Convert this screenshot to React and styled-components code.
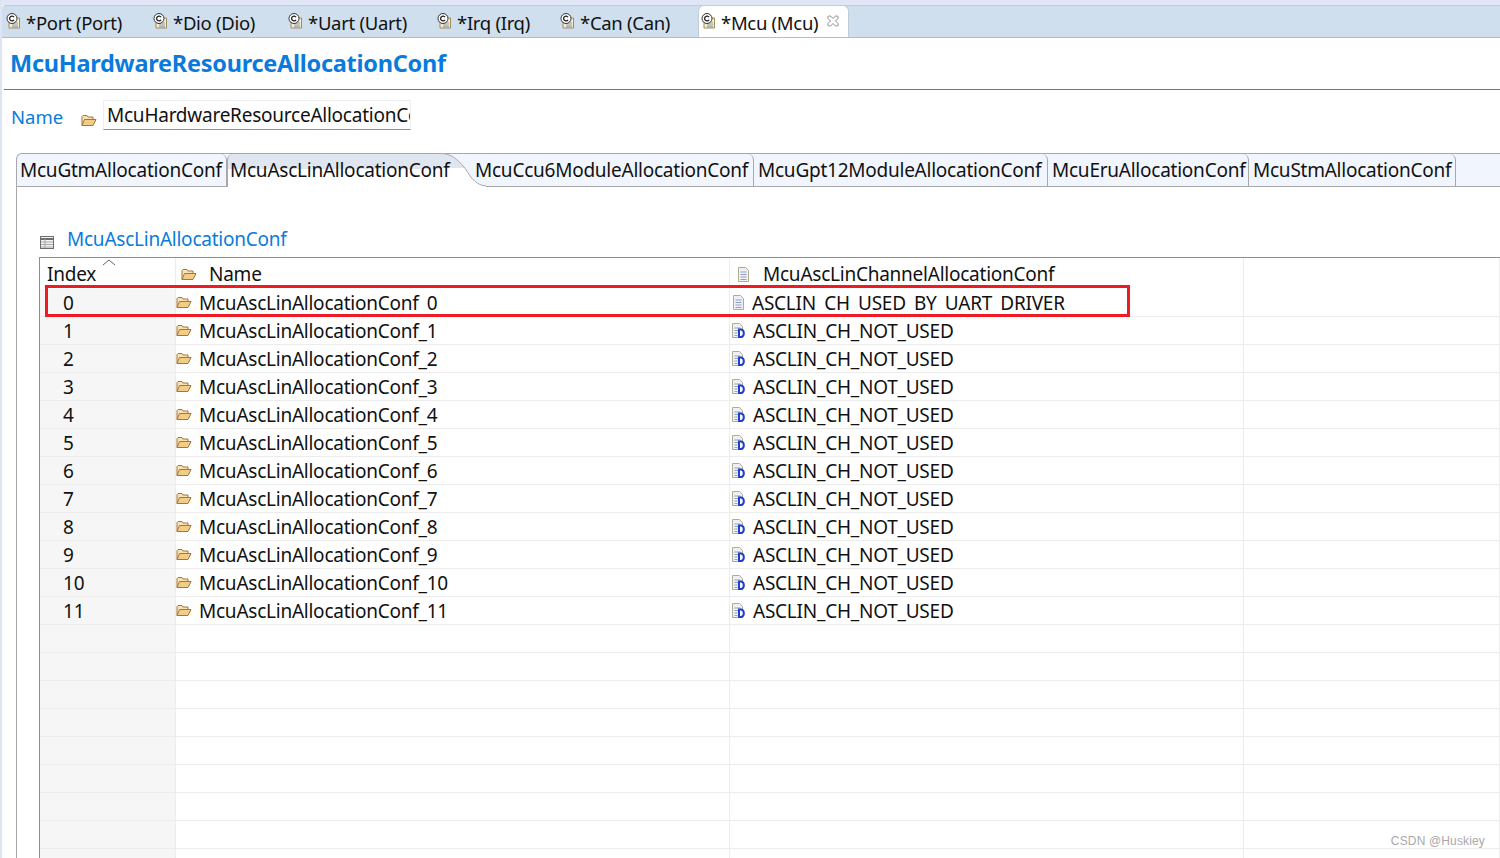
import React from 'react';
import styled, { createGlobalStyle } from 'styled-components';

const Global = createGlobalStyle`
  html, body { margin: 0; padding: 0; background: #fff; }
  body { font-family: "Noto Sans", "Open Sans", sans-serif; color: #111; overflow: hidden; }
`;

const Window = styled.div`
  position: relative;
  width: 1500px;
  height: 858px;
  overflow: hidden;
  background: #fff;
  border-left: 2px solid #dfe4f3;
  box-sizing: border-box;
  display: flex;
  flex-direction: column;
`;

const EditorTop = styled.div`
  height: 5px;
  margin-left: -2px;
  background: #e0e6f5;
  flex: none;
`;

const EditorTabs = styled.div`
  height: 33px;
  flex: none;
  display: flex;
  box-sizing: border-box;
  padding-left: 4px;
  background: #cfdfee;
  border-top: 1px solid #c3cbd6;
  border-bottom: 1px solid #b5bcc6;
  border-top-left-radius: 4px;
`;

const EditorTab = styled.div`
  width: ${p => p.$w}px;
  flex: none;
  display: flex;
  align-items: center;
  gap: 5px;
  height: ${p => (p.$active ? '32px' : '31px')};
  box-sizing: border-box;
  font-size: 18.5px;
  letter-spacing: -0.3px;
  white-space: nowrap;
  padding-top: 1px;
  ${p => p.$active && `
    background: #fff;
    margin-top: -1px;
    padding-left: 2px;
    border: 1px solid #c3cbd6;
    border-bottom: none;
    border-radius: 6px 6px 0 0;
  `}
`;

const EditorGlyph = styled.svg`
  flex: none;
  margin-top: -3px;
`;

const CloseBox = styled.span`
  display: flex;
  margin-left: 4px;
  margin-top: -2px;
`;

const Header = styled.div`
  flex: none;
  height: 52px;
  margin-left: 2px;
  box-sizing: border-box;
  border-bottom: 1px solid #3488cf;
  display: flex;
  align-items: center;
  padding: 0 0 1px 6px;
`;

const Title = styled.h1`
  margin: 0;
  font-size: 23.5px;
  font-weight: 700;
  color: #0a7bdc;
  letter-spacing: -0.27px;
`;

const NameRow = styled.div`
  flex: none;
  height: 63px;
  display: flex;
  align-items: flex-start;
  padding: 10px 0 0 8px;
  box-sizing: border-box;
`;

const NameLabel = styled.span`
  font-size: 18.5px;
  color: #0a7bdc;
  line-height: 34px;
  width: 71px;
  box-sizing: border-box;
  padding-left: 1px;
`;

const FolderSlot = styled.span`
  width: 22px;
  display: flex;
  padding-top: 14px;
`;

const NameInput = styled.div`
  width: 308px;
  height: 30px;
  box-sizing: border-box;
  overflow: hidden;
  background: #fff;
  border-bottom: 1px solid #8f8f8f;
  border-left: 1px solid #eee;
  border-right: 1px solid #eee;
  border-top: 1px solid #eee;
  padding-left: 3px;
  font-size: 19px;
  letter-spacing: -0.24px;
  line-height: 29px;
  white-space: nowrap;
`;

const Folder = styled.div`
  flex: 1;
  min-height: 0;
  margin-left: 14px;
  display: flex;
  flex-direction: column;
`;

const FolderTabs = styled.div`
  height: 34px;
  flex: none;
  display: flex;
  box-sizing: border-box;
  background: #f1f6fe;
  border-top: 1px solid #a8a8a8;
  border-bottom: 1px solid #a8a8a8;
  border-left: 1px solid #a8a8a8;
  border-top-left-radius: 6px;
`;

const FolderTab = styled.div`
  position: relative;
  width: ${p => p.$w}px;
  flex: none;
  box-sizing: border-box;
  padding-left: ${p => p.$pad}px;
  font-size: 19px;
  line-height: 32px;
  white-space: nowrap;
  letter-spacing: -0.24px;
  border-right: 1px solid #a8a8a8;
  border-top-right-radius: 6px;
  ${p => p.$active && `
    height: 33px;
    background: linear-gradient(#dfe6ef 0, #dfe6ef 15px, #fff 15px) no-repeat;
    background-size: 213px 100%;
    border-right: none;
    border-left: 1px solid #a8a8a8;
    border-top-left-radius: 6px;
    border-top-right-radius: 0;
    z-index: 1;
  `}
`;

const TabCurve = styled.svg`
  position: absolute;
  left: 213px;
  top: -1px;
  z-index: -1;
`;

const FolderBody = styled.div`
  flex: 1;
  min-height: 0;
  border-left: 1px solid #a8a8a8;
  padding: 38px 0 0 22px;
  display: flex;
  flex-direction: column;
`;

const SectionHead = styled.div`
  flex: none;
  height: 32px;
  display: flex;
  align-items: flex-start;
  color: #0a7bdc;
  font-size: 19px;
  line-height: 28px;
  letter-spacing: -0.24px;
`;

const SectionIcon = styled.span`
  width: 28px;
  box-sizing: border-box;
  display: flex;
  padding: 11px 0 0 1px;
`;

const TableWrap = styled.div`
  flex: 1;
  min-height: 0;
  border-top: 1px solid #8c8c8c;
  border-left: 1px solid #8c8c8c;
  overflow: hidden;
`;

const Row = styled.div`
  display: grid;
  grid-template-columns: 136px 554px 514px 1fr;
  height: ${p => (p.$head ? 31 : 28)}px;
  box-sizing: border-box;
  border-bottom: ${p => (p.$head ? 'none' : '1px solid #ececec')};
`;

const Cell = styled.div`
  display: flex;
  align-items: center;
  font-size: 19px;
  letter-spacing: -0.24px;
  white-space: nowrap;
  border-right: 1px solid #ececec;
  box-sizing: border-box;
  padding-left: ${p => p.$pad || 0}px;
  background: ${p => (p.$index ? '#f6f6f6' : 'transparent')};
  gap: ${p => p.$gap || 0}px;
`;

const HeadCell = styled(Cell)`
  position: relative;
  padding-top: 1px;
  background: #fff;
`;

/* in the first row the red frame sits on the underscores */
const CellText = styled.span`
  ${p => p.$framed && 'clip-path: inset(0 0 5px 0);'}
`;

const SortArrow = styled.svg`
  position: absolute;
  left: 62px;
  top: 1px;
`;

const Highlight = styled.div`
  position: absolute;
  left: 43px;
  top: 285px;
  width: 1085px;
  height: 32px;
  box-sizing: border-box;
  border: 3px solid #ed1c24;
`;

const Watermark = styled.div`
  position: absolute;
  right: 15px;
  top: 834px;
  font-family: "Liberation Sans", sans-serif;
  font-size: 12px;
  color: #a9a9a9;
  letter-spacing: 0.15px;
`;

const EditorIcon = () => (
  <EditorGlyph width="15" height="16" viewBox="0 0 15 16">
    <path d="M3 5h10.500v10H3z" fill="#f4edd2" stroke="#a08c55" />
    <path d="M6 10h6M6 12h6M6 13.800h6" stroke="#8e9aa8" />
    <circle cx="6" cy="5.500" r="5" fill="#fff" stroke="#333" />
    <path d="M8 4.200a2.400 2.400 0 1 0 0 2.700" fill="none" stroke="#222" strokeWidth="1.300" />
  </EditorGlyph>
);

const CloseIcon = () => (
  <svg width="12" height="12" viewBox="0 0 12 12">
    <path
      d="M1.500 1h2L6 3.500 8.500 1h2l.5.500v2L8.500 6 11 8.500v2l-.5.500h-2L6 8.500 3.500 11h-2l-.5-.500v-2L3.500 6 1 3.500v-2z"
      fill="#fff"
      stroke="#8d8d8d"
    />
  </svg>
);

const FolderIcon = () => (
  <svg width="16" height="13" viewBox="0 0 16 13">
    <path d="M1 11.500V2.500L2 1.500h4l1 1.500h5v2" fill="#f6e2b4" stroke="#a5753a" />
    <path d="M1 11.500L3.500 5.500H15l-3 6z" fill="#f3cd87" stroke="#a5753a" strokeLinejoin="round" />
  </svg>
);

const PageIcon = () => (
  <svg width="13" height="15" viewBox="0 0 13 15">
    <path d="M1.500 .5h7l3 3v11h-10z" fill="#eef0f6" stroke="#b3ab8b" />
    <path d="M3.500 5h6M3.500 7.500h6M3.500 10h6M3.500 12.500h6" stroke="#8ea0c6" />
  </svg>
);

const PageDIcon = () => (
  <svg width="14" height="15" viewBox="0 0 14 15">
    <path d="M.5 .5h7l3 3v11H.5z" fill="#eef0f6" stroke="#b3ab8b" />
    <path d="M2.500 5h6M2.500 7.500h4M2.500 10h3M2.500 12.500h3" stroke="#8ea0c6" />
    <path d="M7 6.500h2.500a3.200 3.900 0 0 1 0 7.500H7z" fill="#fff" stroke="#1f3fd0" strokeWidth="2" />
  </svg>
);

const TableIcon = () => (
  <svg width="14" height="13" viewBox="0 0 14 13">
    <rect x=".5" y=".5" width="13" height="12" fill="#f4f4f4" stroke="#6d6d6d" />
    <path d="M.5 3h13" stroke="#6d6d6d" strokeWidth="2" />
    <path d="M1 6h12M1 8.500h12M1 11h12M5 3v9" stroke="#a5a5a5" />
  </svg>
);

const editorTabs = [
  { label: '*Port (Port)', w: 147 },
  { label: '*Dio (Dio)', w: 135 },
  { label: '*Uart (Uart)', w: 149 },
  { label: '*Irq (Irq)', w: 123 },
  { label: '*Can (Can)', w: 138 },
];

const folderTabs = [
  { label: 'McuGtmAllocationConf', w: 210, pad: 3 },
  { label: 'McuAscLinAllocationConf', w: 248, pad: 2, active: true },
  { label: 'McuCcu6ModuleAllocationConf', w: 279, pad: 0 },
  { label: 'McuGpt12ModuleAllocationConf', w: 294, pad: 4 },
  { label: 'McuEruAllocationConf', w: 201, pad: 4 },
  { label: 'McuStmAllocationConf', w: 207, pad: 4 },
];

const rows = Array.from({ length: 12 }, (_, i) => i);
const emptyRows = Array.from({ length: 9 }, (_, i) => i);

export default function App() {
  return (
    <Window>
      <Global />
      <EditorTop />
      <EditorTabs>
        {editorTabs.map(t => (
          <EditorTab key={t.label} $w={t.w}>
            <EditorIcon />
            <span>{t.label}</span>
          </EditorTab>
        ))}
        <EditorTab $w={151} $active>
          <EditorIcon />
          <span>*Mcu (Mcu)</span>
          <CloseBox><CloseIcon /></CloseBox>
        </EditorTab>
      </EditorTabs>

      <Header>
        <Title>McuHardwareResourceAllocationConf</Title>
      </Header>

      <NameRow>
        <NameLabel>Name</NameLabel>
        <FolderSlot><FolderIcon /></FolderSlot>
        <NameInput>McuHardwareResourceAllocationConf</NameInput>
      </NameRow>

      <Folder>
        <FolderTabs>
          {folderTabs.map(t => (
            <FolderTab key={t.label} $w={t.w} $pad={t.pad} $active={t.active}>
              {t.label}
              {t.active && (
                <TabCurve width="45" height="34" viewBox="0 0 45 34">
                  <path d="M0 .5C10 .5 16 6 23 14 28 20 32 32 45 33v1H0z" fill="#fff" />
                  <path d="M0 .5C10 .5 16 6 24 15H0z" fill="#dfe6ef" />
                  <path d="M0 .5C10 .5 16 6 23 14 28 20 32 32 45 33" fill="none" stroke="#a8a8a8" />
                </TabCurve>
              )}
            </FolderTab>
          ))}
        </FolderTabs>
        <FolderBody>
          <SectionHead>
            <SectionIcon><TableIcon /></SectionIcon>
            McuAscLinAllocationConf
          </SectionHead>
          <TableWrap>
            <Row $head>
              <HeadCell $pad={7}>
                Index
                <SortArrow width="14" height="7" viewBox="0 0 14 7">
                  <path d="M1 6l6-5 6 5" fill="none" stroke="#666" />
                </SortArrow>
              </HeadCell>
              <HeadCell $pad={5} $gap={12}>
                <FolderIcon />
                Name
              </HeadCell>
              <HeadCell $pad={7} $gap={13}>
                <PageIcon />
                McuAscLinChannelAllocationConf
              </HeadCell>
              <HeadCell />
            </Row>
            {rows.map(i => (
              <Row key={i}>
                <Cell $index $pad={23}>{i}</Cell>
                <Cell $gap={7}>
                  <FolderIcon />
                  <CellText $framed={i === 0}>McuAscLinAllocationConf_{i}</CellText>
                </Cell>
                <Cell $pad={2} $gap={7}>
                  {i === 0 ? <PageIcon /> : <PageDIcon />}
                  <CellText $framed={i === 0}>
                    {i === 0 ? 'ASCLIN_CH_USED_BY_UART_DRIVER' : 'ASCLIN_CH_NOT_USED'}
                  </CellText>
                </Cell>
                <Cell />
              </Row>
            ))}
            {emptyRows.map(i => (
              <Row key={i}>
                <Cell $index />
                <Cell />
                <Cell />
                <Cell />
              </Row>
            ))}
          </TableWrap>
        </FolderBody>
      </Folder>
      <Highlight />
      <Watermark>CSDN @Huskiey</Watermark>
    </Window>
  );
}
